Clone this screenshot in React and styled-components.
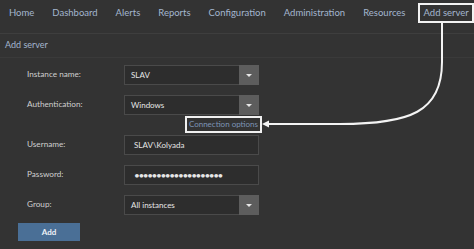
import React from 'react';
import styled, { createGlobalStyle } from 'styled-components';

const GlobalStyle = createGlobalStyle`
  html, body {
    margin: 0;
    padding: 0;
    background: #333333;
  }
  body {
    font-family: Lato, 'Open Sans', sans-serif;
  }
`;

const Page = styled.div`
  position: relative;
  width: 474px;
  height: 249px;
  overflow: hidden;
  background: #333333;
`;

const Nav = styled.nav`
  display: flex;
  align-items: center;
  gap: 18px;
  height: 34px;
  padding: 0 0 7px 9px;
  border-bottom: 1px solid #3e3e3e;
  box-sizing: border-box;
`;

const NavItem = styled.span`
  font-size: 9.5px;
  color: #a3b6cf;
  white-space: nowrap;
  line-height: 16px;
  ${({ $active }) => $active && `
    margin-left: -5px;
    padding: 0 3px;
    border: 2px solid #f2f2f2;
  `}
`;

const Heading = styled.div`
  height: 23px;
  padding-left: 5px;
  font-size: 9px;
  line-height: 22px;
  color: #a3b6cf;
  border-bottom: 1px solid #3a3a3a;
`;

const Form = styled.div`
  display: grid;
  grid-template-columns: 97px 135px;
  row-gap: 10px;
  padding: 7px 0 0 27px;
`;

const Label = styled.label`
  font-size: 8.2px;
  color: #cfcfcf;
  line-height: 20px;
  height: 20px;
  margin-top: -1px;
`;

const Field = styled.div`
  display: flex;
  height: 20px;
  box-sizing: border-box;
  border: 1px solid #4a4a4a;
  background: #2d2d2d;
`;

const Value = styled.span`
  flex: 1;
  padding-left: ${({ $input }) => ($input ? '9px' : '6px')};
  font-size: ${({ $dots }) => ($dots ? '10px' : '8px')};
  line-height: 18px;
  color: #e6e6e6;
  letter-spacing: ${({ $dots }) => ($dots ? '-1.4px' : '0')};
`;

const Caret = styled.span`
  display: flex;
  align-items: center;
  justify-content: center;
  width: 20px;
  margin: -1px -1px -1px 0;
  background: #5d5d5d;
  &::after {
    content: '';
    border-left: 3px solid transparent;
    border-right: 3px solid transparent;
    border-top: 3px solid #e8e8e8;
  }
`;

const LinkRow = styled.div`
  grid-column: 2;
  display: flex;
  justify-content: flex-end;
  margin: -9px -3px -8px 0;
`;

const Link = styled.span`
  font-size: 8px;
  line-height: 12px;
  white-space: nowrap;
  color: #7d93b5;
  padding: 0 2px;
  border: 2px solid #f0f0f0;
`;

const Button = styled.button`
  display: block;
  margin: 8px 0 0 18px;
  width: 62px;
  height: 18px;
  border: none;
  background: #4a6f96;
  color: #eef2f7;
  font-family: inherit;
  font-size: 8px;
  font-weight: 700;
  padding: 0;
`;

const Arrow = styled.svg`
  position: absolute;
  left: 0;
  top: 0;
  pointer-events: none;
`;

const rows = [
  { label: 'Instance name:', value: 'SLAV', select: true },
  { label: 'Authentication:', value: 'Windows', select: true, link: true },
  { label: 'Username:', value: 'SLAV\\Kolyada' },
  { label: 'Password:', value: '••••••••••••••••••••', dots: true },
  { label: 'Group:', value: 'All instances', select: true },
];

const navItems = ['Home', 'Dashboard', 'Alerts', 'Reports', 'Configuration', 'Administration', 'Resources'];

const App = () => {
  return (
    <Page>
      <GlobalStyle />
      <Nav>
        {navItems.map((item) => (
          <NavItem key={item}>{item}</NavItem>
        ))}
        <NavItem $active>Add server</NavItem>
      </Nav>
      <Heading>Add server</Heading>
      <Form>
        {rows.map((row) => (
          <React.Fragment key={row.label}>
            <Label>{row.label}</Label>
            <Field>
              <Value $dots={row.dots} $input={!row.select}>{row.value}</Value>
              {row.select && <Caret />}
            </Field>
            {row.link && (
              <LinkRow>
                <Link>Connection options</Link>
              </LinkRow>
            )}
          </React.Fragment>
        ))}
      </Form>
      <Button>Add</Button>
      <Arrow width="474" height="249" viewBox="0 0 474 249">
        <path
          d="M442 23 L442 62 C442 112 410 124 340 124 L268 124"
          fill="none"
          stroke="#f4f4f4"
          strokeWidth="2"
        />
        <path d="M262 124 L269 120.5 L269 127.5 Z" fill="#f4f4f4" />
      </Arrow>
    </Page>
  );
};

export default App;
